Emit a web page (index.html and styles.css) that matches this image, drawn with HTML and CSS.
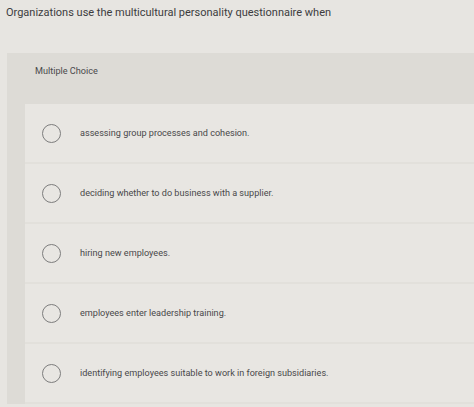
FILE: index.html
```html
<!DOCTYPE html>
<html>
<head>
<meta charset="utf-8">
<link rel="stylesheet" href="styles.css">
</head>
<body>
<div class="page">
  <p class="question">Organizations use the multicultural personality questionnaire when</p>
  <div class="panel">
    <div class="panel-head">Multiple Choice</div>
    <ul class="options">
      <li class="option"><span class="radio"></span><span class="label">assessing group processes and cohesion.</span></li>
      <li class="option"><span class="radio"></span><span class="label">deciding whether to do business with a supplier.</span></li>
      <li class="option"><span class="radio"></span><span class="label">hiring new employees.</span></li>
      <li class="option"><span class="radio"></span><span class="label">employees enter leadership training.</span></li>
      <li class="option"><span class="radio"></span><span class="label">identifying employees suitable to work in foreign subsidiaries.</span></li>
    </ul>
  </div>
</div>
</body>
</html>
```

FILE: styles.css
```css
html, body {
  margin: 0;
  padding: 0;
  background: #e7e5e1;
  font-family: Roboto, "Open Sans", sans-serif;
}
.page {
  width: 474px;
  height: 407px;
  overflow: hidden;
}
.question {
  margin: 0;
  padding: 4px 0 0 6px;
  font-size: 11px;
  line-height: 17px;
  color: #3c3c3e;
}
.panel {
  margin: 32px 0 0 7px;
  background: #dddbd6;
}
.panel-head {
  padding: 11px 0 0 28px;
  height: 51px;
  box-sizing: border-box;
  font-size: 9.15px;
  line-height: 14px;
  color: #4a4a4c;
}
.options {
  list-style: none;
  margin: 0 0 0 18px;
  padding: 0;
}
.option {
  display: flex;
  align-items: center;
  height: 60px;
  background: #e8e6e2;
  border-bottom: 2px solid #e2e0db;
  box-sizing: border-box;
}
.radio {
  width: 17px;
  height: 17px;
  border: 1.2px solid #7d7d7d;
  border-radius: 50%;
  margin-left: 17px;
  flex: none;
}
.label {
  margin-left: 19px;
  font-size: 9.1px;
  color: #48484a;
}
```
